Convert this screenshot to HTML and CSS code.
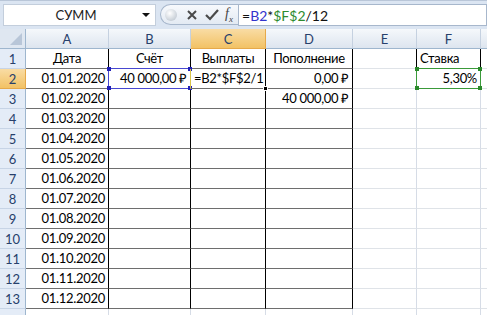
FILE: index.html
```html
<!DOCTYPE html>
<html lang="ru">
<head>
    <meta charset="UTF-8">
    <title>Excel — СУММ</title>
    <link rel="stylesheet" href="styles.css">
</head>
<body>
    <!-- Formula bar: name box, buttons, formula -->
    <div class="formula-bar">
        <div class="name-box">
            <span class="name">СУММ</span>
            <span class="drop"></span>
        </div>
        <div class="buttons">
            <span class="ghost"></span>
            <svg class="btn" width="14" height="14" viewBox="0 0 14 14">
                <path d="M3 3 L11 11 M11 3 L3 11" stroke="#4a4a4a" stroke-width="2" fill="none"/>
            </svg>
            <svg class="btn" width="16" height="14" viewBox="0 0 16 14">
                <path d="M2 7 L6 11 L14 2" stroke="#4a4a4a" stroke-width="2.2" fill="none"/>
            </svg>
            <span class="fx">f<sub>x</sub></span>
        </div>
        <div class="formula">=<span class="ref-blue">B2</span>*<span class="ref-green">$F$2</span>/12</div>
    </div>

    <!-- Sheet grid -->
    <div class="sheet">
        <div class="hd corner"><span class="tri"></span></div>
        <div class="hd col">A</div>
        <div class="hd col">B</div>
        <div class="hd col active">C</div>
        <div class="hd col">D</div>
        <div class="hd col">E</div>
        <div class="hd col">F</div>
        <div class="hd col"></div>

        <div class="hd row">1</div>
        <div class="c t center">Дата</div>
        <div class="c t center">Счёт</div>
        <div class="c t center">Выплаты</div>
        <div class="c t center">Пополнение</div>
        <div class="c edge"></div>
        <div class="c edge">Ставка</div>
        <div class="c"></div>

        <div class="hd row active">2</div>
        <div class="c t right">01.01.2020</div>
        <div class="c t right sel-wrap">40 000,00 ₽<span class="sel blue"><i class="h tl"></i><i class="h tr"></i><i class="h bl"></i><i class="h br"></i></span></div>
        <div class="c t editing">=B2*$F$2/1<span class="fill"></span></div>
        <div class="c t right">0,00 ₽</div>
        <div class="c edge"></div>
        <div class="c edge right sel-wrap">5,30%<span class="sel green"><i class="h tl"></i><i class="h tr"></i><i class="h bl"></i><i class="h br"></i></span></div>
        <div class="c"></div>

        <div class="hd row">3</div>
        <div class="c t right">01.02.2020</div>
        <div class="c t"></div>
        <div class="c t"></div>
        <div class="c t right">40 000,00 ₽</div>
        <div class="c"></div>
        <div class="c"></div>
        <div class="c"></div>
    </div>

    <script>
        // Date rows 4..13
        const sheet = document.querySelector('.sheet');
        for (let r = 4; r <= 13; r++) {
            const month = String(r - 1).padStart(2, '0');
            let html = `<div class="hd row">${r}</div>`;
            html += `<div class="c t right">01.${month}.2020</div>`;
            html += '<div class="c t"></div><div class="c t"></div><div class="c t"></div>';
            html += '<div class="c"></div><div class="c"></div><div class="c"></div>';
            sheet.insertAdjacentHTML('beforeend', html);
        }
        // Top sliver of row 14
        sheet.insertAdjacentHTML('beforeend',
            '<div class="hd row"></div>' + '<div class="c"></div>'.repeat(7));
    </script>
</body>
</html>
```

FILE: styles.css
```css
body {
    margin: 0;
    background: #fff;
    font-family: Lato, "Open Sans", sans-serif;
    color: #000;
    overflow: hidden;
}

/* ---------- formula bar ---------- */

.formula-bar {
    display: flex;
    align-items: center;
    height: 29px;
    box-sizing: border-box;
    padding: 3px 0 4px 0;
    background: #dbe5f2;
    border-top: 1px solid #b9c6d8;
}

.name-box {
    display: flex;
    align-items: center;
    width: 153px;
    height: 22px;
    margin-left: 3px;
    background: #fff;
    border: 1px solid #c3cedc;
    box-sizing: border-box;
}

.name {
    flex: 1;
    text-align: center;
    font-size: 13px;
    color: #222;
    padding-left: 6px;
}

.drop {
    width: 0;
    height: 0;
    margin-right: 5px;
    border-left: 4px solid transparent;
    border-right: 4px solid transparent;
    border-top: 4px solid #111;
}

.buttons {
    display: flex;
    align-items: center;
    gap: 5px;
    height: 21px;
    margin-left: 4px;
    padding-left: 4px;
    width: 78px;
    box-sizing: border-box;
    border: 1px solid #a7b7cc;
    border-right: none;
    border-radius: 11px 0 0 11px;
    background: linear-gradient(#f7f9fc, #e3eaf3);
}

.ghost {
    width: 12px;
    height: 12px;
    border-radius: 50%;
    background: radial-gradient(circle at 40% 35%, #fff, #c9d0d8 70%);
    margin-right: 3px;
}

.fx {
    font-family: "Liberation Serif", serif;
    font-style: italic;
    font-size: 14px;
    color: #444;
}

.fx sub {
    font-size: 9px;
}

.formula {
    flex: 1;
    height: 22px;
    line-height: 21px;
    box-sizing: border-box;
    padding-left: 3px;
    background: #fff;
    border: 1px solid #a7b7cc;
    font-size: 14px;
    color: #111;
}

.ref-blue {
    color: #3333cc;
}

.ref-green {
    color: #2e8b2e;
}

/* ---------- sheet ---------- */

.sheet {
    display: grid;
    grid-template-columns: 26px 83px 82px 75px 87px 64px 64px 1fr;
    grid-auto-rows: 20px;
}

.hd {
    box-sizing: border-box;
    display: flex;
    align-items: center;
    justify-content: center;
    font-size: 13px;
    color: #27406b;
}

.col {
    background: linear-gradient(#f5f8fb, #dde5ef);
    border-right: 1px solid #c5d1e0;
    border-bottom: 1px solid #9eb6ce;
}

.row {
    background: #e4ecf7;
    border-right: 1px solid #9eb6ce;
    border-bottom: 1px solid #c7d4e6;
}

.hd.active {
    background: linear-gradient(#f9dca4, #f2c265);
    border-color: #e6a94a;
}

.corner {
    position: relative;
    background: #dfe7f1;
    border-right: 1px solid #9eb6ce;
    border-bottom: 1px solid #9eb6ce;
}

.tri {
    position: absolute;
    right: 3px;
    bottom: 3px;
    width: 0;
    height: 0;
    border-left: 12px solid transparent;
    border-bottom: 12px solid #b8c6d8;
}

.c {
    box-sizing: border-box;
    display: flex;
    align-items: flex-end;
    padding: 0 3px 1px 3px;
    font-size: 13px;
    letter-spacing: -0.3px;
    line-height: 17px;
    white-space: nowrap;
    overflow: hidden;
    border-right: 1px solid #d6dce6;
    border-bottom: 1px solid #dfe3e8;
}

/* the bordered table A1:D13 */
.c.t {
    border-right: 1px solid #000;
    border-bottom: 1px solid #6e6e6e;
}

/* black edges around F1:F2 */
.c.edge {
    border-right: 1px solid #000;
}

.center {
    justify-content: center;
}

.right {
    justify-content: flex-end;
}

.sel-wrap,
.editing {
    position: relative;
    overflow: visible;
}

.editing {
    border-left: 1px solid #d8c24a;
    margin-left: -1px;
    padding-left: 3px;
}

.sel {
    position: absolute;
    left: -1px;
    top: -1px;
    right: -1px;
    bottom: -1px;
    border: 1px solid;
}

.sel.blue {
    border-color: #4848d0;
}

.sel.green {
    border-color: #3a9a3a;
}

.h {
    position: absolute;
    width: 4px;
    height: 4px;
}

.blue .h {
    background: #2020b8;
}

.green .h {
    background: #2b8a2b;
}

.tl { left: -2px; top: -2px; }
.tr { right: -2px; top: -2px; }
.bl { left: -2px; bottom: -2px; }
.br { right: -2px; bottom: -2px; }

.fill {
    position: absolute;
    right: -3px;
    bottom: -3px;
    width: 3px;
    height: 3px;
    background: #000;
    border: 1px solid #fff;
}
```
